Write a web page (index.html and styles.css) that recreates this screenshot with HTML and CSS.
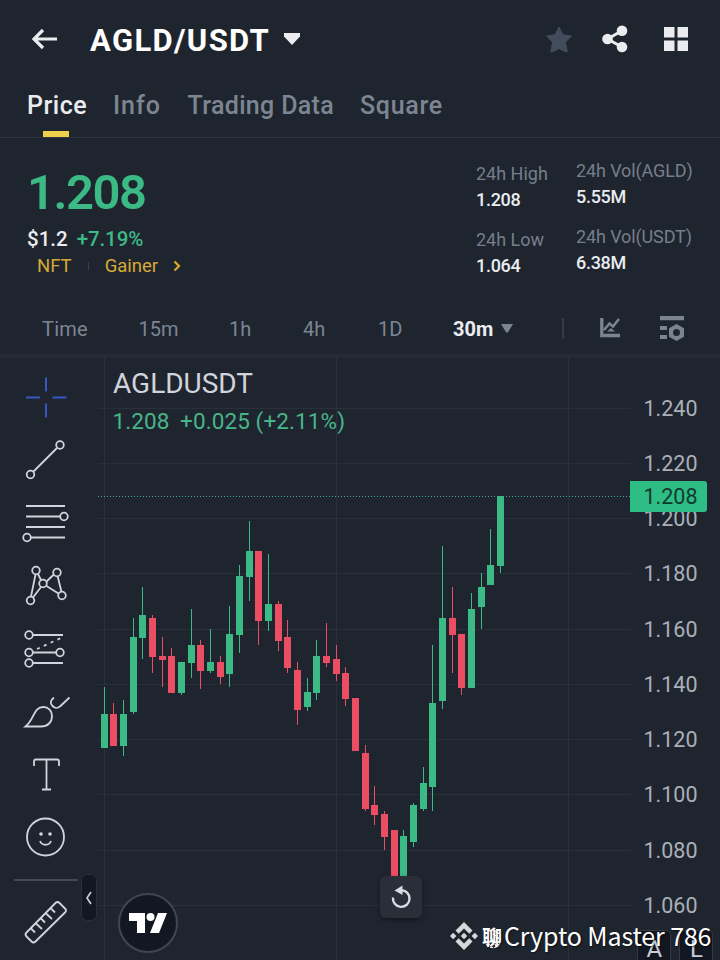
FILE: index.html
```html
<!DOCTYPE html>
<html lang="en">
<head>
<meta charset="utf-8">
<title>AGLD/USDT</title>
<link rel="stylesheet" href="styles.css">
</head>
<body>
<div class="app">
  <header class="topbar">
    <svg class="back" width="28" height="22" viewBox="0 0 28 22"><path d="M14 2 5 11l9 9M5 11h23" fill="none" stroke="#eaecef" stroke-width="3.200"/></svg>
    <h1 class="pair">AGLD/USDT</h1>
    <svg class="caret" width="18" height="14" viewBox="0 0 18 14"><path d="M1 1h16v3.500L9 13 1 4.500z" fill="#eaecef"/></svg>
    <div class="actions">
      <svg width="28" height="28" viewBox="0 0 28 28"><path d="m14 2 3.900 7.700 8.600 1.400-6.100 6.100 1.900 9.300-1.200.5L14 23.700 6.900 27l-1.200-.5 1.900-9.300-6.100-6.100 8.600-1.400z" fill="#434c5a" stroke="#434c5a" stroke-linejoin="round"/></svg>
      <svg width="28" height="28" viewBox="0 0 28 28"><g fill="#eaecef"><circle cx="7.500" cy="14" r="5.300"/><circle cx="22" cy="5.700" r="5.300"/><circle cx="22" cy="22" r="5.300"/></g><path d="M22 5.700 7.500 14 22 22" fill="none" stroke="#eaecef" stroke-width="3"/></svg>
      <svg width="26" height="26" viewBox="0 0 26 26"><path d="M1 1h10.500v10.500H1zM14.500 1H25v10.500H14.500zM1 14.500h10.500V25H1zM14.500 14.500H25V25H14.500z" fill="#eaecef"/></svg>
    </div>
  </header>

  <nav class="tabs">
    <a class="tab tab-active">Price</a>
    <a class="tab tab-info">Info</a>
    <a class="tab tab-data">Trading Data</a>
    <a class="tab">Square</a>
  </nav>

  <section class="summary">
    <div class="quote">
      <div class="last">1.208</div>
      <div class="change"><span>$1.2</span><span class="up">+7.19%</span></div>
      <div class="tags"><span>NFT</span><i class="tag-sep"></i><span class="gainer">Gainer</span>
        <svg width="8" height="12" viewBox="0 0 8 12"><path d="m1.500 1.500 4.500 4.500-4.500 4.500" fill="none" stroke="#d9a928" stroke-width="2.200"/></svg>
      </div>
    </div>
    <div class="stats stats-range">
      <div class="label">24h High</div><div class="value">1.208</div>
      <div class="label">24h Low</div><div class="value">1.064</div>
    </div>
    <div class="stats stats-vol">
      <div class="label">24h Vol(AGLD)</div><div class="value">5.55M</div>
      <div class="label">24h Vol(USDT)</div><div class="value">6.38M</div>
    </div>
  </section>

  <nav class="intervals">
    <span class="iv iv-time">Time</span><span class="iv iv-15">15m</span><span class="iv iv-1h">1h</span><span class="iv iv-4h">4h</span><span class="iv iv-1d">1D</span><span class="iv iv-on">30m</span>
    <svg class="iv-caret" width="12" height="9" viewBox="0 0 12 9"><path d="M0 0h12L6.800 8.500H5.200z" fill="#7c8492"/></svg>
    <i class="iv-sep"></i>
    <svg class="iv-line" width="20" height="21" viewBox="0 0 20 21"><g fill="none" stroke="#7c8492"><path d="M1.800 0v17.500H20" stroke-width="3.300"/><path d="m4 12 5.500-6.500 3.500 3 6-7.500" stroke-width="2.600"/></g><path d="m7 13.500 4-3.500 4 3.500z" fill="#7c8492"/></svg>
    <svg class="iv-set" width="26" height="26" viewBox="0 0 26 26"><path d="M1 0h24v4.200H1zM1 10h7v4H1zM1 19h7v4H1z" fill="#7c8492"/><path fill-rule="evenodd" d="m17.500 8 7.500 4.200v8.600L17.500 25 10 20.800v-8.600zM17.500 13a3.500 3.500 0 1 0 0 7 3.500 3.500 0 0 0 0-7z" fill="#7c8492"/></svg>
  </nav>

  <main class="board">
    <aside class="tools">
      <svg class="tool" viewBox="0 0 60 60"><path d="M30 10.500v14M30 36.500v14M10 30.500h14M36.500 30.500h14" stroke="#3558c4" stroke-width="2"/></svg>
      <svg class="tool" viewBox="0 0 60 60"><circle cx="14.500" cy="44.500" r="3.800"/><circle cx="44" cy="15" r="3.800"/><path d="m17.500 41.500 23.500-23.500"/></svg>
      <svg class="tool" viewBox="0 0 60 60"><path d="M10 13h39M10 23.500h34M10 34h39M15 44.500h34"/><circle cx="48" cy="23.500" r="3.800"/><circle cx="11" cy="44.500" r="3.800"/></svg>
      <svg class="tool" viewBox="0 0 60 60"><circle cx="20" cy="14.500" r="3.800"/><circle cx="41" cy="16.500" r="3.800"/><circle cx="27" cy="27.500" r="3.800"/><circle cx="14.500" cy="44.500" r="3.800"/><circle cx="46" cy="39.500" r="3.800"/><path d="m22 18 3 6M19.500 18.500 15 40.500M17 41.500l8-10.500M30.500 25.500l7.300-7M30.500 30l12 7.500M41.700 20.500l3.700 15"/></svg>
      <svg class="tool" viewBox="0 0 60 60"><circle cx="13" cy="16" r="3.800"/><circle cx="13" cy="33.500" r="3.800"/><circle cx="44" cy="33.500" r="3.800"/><circle cx="13" cy="44" r="3.800"/><path d="M17 16h30M17 33.500h23M17 44h30"/><path d="m21 30 24-11" stroke-dasharray="3 4.500"/></svg>
      <svg class="tool" viewBox="0 0 60 60"><path d="M9.500 44.500C19 37 17 25 27.500 25c5 0 8.500 4 8.500 9 0 6-4 10.500-11 10.500zM38 15.500c-4 3-4 6-1.500 8.500s4.500 3 8 0L53.500 15.500"/></svg>
      <svg class="tool" viewBox="0 0 60 60"><path d="M18 21v-4.500q0-2 2-2h21q2 0 2 2V21M30.500 14.500v30M26 44.500h9"/></svg>
      <svg class="tool" viewBox="0 0 60 60"><circle cx="29.500" cy="29" r="18.500"/><path d="M24 33c2 5 9 5 11 0"/><circle class="dot" cx="25" cy="26" r="1.800"/><circle class="dot" cx="34" cy="26" r="1.800"/></svg>
      <i class="tools-rule"></i>
      <svg class="tool tool-ruler" viewBox="0 0 60 60"><path d="m10.500 41.500 29-29.500q2-2 4 0l5.500 5.500q2 2 0 4l-29.500 29q-2 2-4 0l-5-5q-2-2 0-4zM15 37.500l4 4M20 32.500l6 5.500M25 27.500l4 4M30 22.500l6 5.500M35 17.500l4 4"/></svg>
      <button class="collapse"><svg width="8" height="14" viewBox="0 0 8 14"><path d="M6 1 2 7l4 6" fill="none" stroke="#c9ccd5" stroke-width="1.700"/></svg></button>
    </aside>
    <div class="chart">
      <svg id="chart" width="622" height="606" viewBox="98 354 622 606">
        <g id="grid"></g>
        <g id="candles"></g>
        <path class="last-line" d="M98 496.500h532"/>
        <text class="symbol" x="113" y="393" textLength="140">AGLDUSDT</text>
        <text class="legend" x="112.500" y="429" textLength="57">1.208</text>
        <text class="legend" x="180" y="429" textLength="165">+0.025 (+2.11%)</text>
        <g id="axis"></g>
        <path d="M630 481h74q3 0 3 3v25q0 3-3 3h-74z" fill="#2ebd85"/>
        <text class="tick tick-last" x="643.500" y="504" textLength="54">1.208</text>
        <g class="modes"><rect x="637.500" y="930.500" width="33" height="40" rx="4"/><rect x="679.500" y="930.500" width="33" height="40" rx="4"/></g>
        <text class="mode" x="646.500" y="957">A</text>
        <text class="mode" x="690" y="957">L</text>
      </svg>
      <div class="tv-logo"><svg width="38" height="20" viewBox="0 0 38 20"><path d="M0 0h16v20H8V8H0zM29 0h9l-8 20h-9z" fill="#fff"/><circle cx="21.500" cy="4" r="4" fill="#fff"/></svg></div>
      <button class="reset"><svg width="22" height="24" viewBox="0 0 22 24"><path d="M3 12.500A8.300 8.300 0 1 0 11 5.300" fill="none" stroke="#d9dbe2" stroke-width="2.400"/><path d="m4.500 5.500 8-5V10z" fill="#d9dbe2"/></svg></button>
      <div class="watermark">
        <svg width="28" height="28" viewBox="0 0 28 28"><path d="m14 0 8.500 8.500-3.200 3.200L14 6.500l-5.300 5.200-3.200-3.200zM14 28l8.500-8.500-3.200-3.200L14 21.500l-5.300-5.200-3.200 3.200zM14 10.800l3.200 3.200-3.200 3.200-3.200-3.200zM3.200 10.800 6.400 14l-3.200 3.200L0 14zM24.800 10.800 28 14l-3.200 3.200-3.200-3.200z" fill="#d7d8d9"/></svg>
        <span class="wm-cjk">聊<svg class="wm-seal" width="18" height="20" viewBox="0 0 18 20"><path d="M5 2q6-2 10 3M3 7q-3 6 1 10M6 18q6 2 9-3M9 5q5 2 3 7t-7 3M14 8q3 4 1 8M7 8l5 9" fill="none" stroke="#fff" stroke-width="1.200" stroke-dasharray="3 1"/></svg></span><span class="wm-name">Crypto Master 786</span>
      </div>
    </div>
  </main>
</div>
<script src="chart.js"></script>
</body>
</html>
```
FILE: styles.css
```css
* { box-sizing: border-box; }
body { margin: 0; background: #1f252f; color: #eaecef; font-family: Roboto, "Liberation Sans", sans-serif; }
.app { width: 720px; height: 960px; overflow: hidden; display: flex; flex-direction: column; }
svg { display: block; flex: none; }
button { padding: 0; border: 0; }

.topbar { height: 78px; display: flex; align-items: center; padding: 0 31px 0 29px; }
.back { margin-top: -1px; }
.pair { margin: 4px 0 0 33px; width: 193px; font-size: 31px; line-height: 36px; font-weight: 700; letter-spacing: 1.350px; color: #fff; white-space: nowrap; }
.actions { margin-left: auto; display: flex; align-items: center; gap: 27.500px; }
.actions svg:last-child { margin-left: 7.500px; }

.tabs { height: 60px; display: flex; padding: 0 27px; border-bottom: 1px solid #303641; }
.tab { position: relative; font-size: 25px; line-height: 29px; padding-top: 13px; font-weight: 500; letter-spacing: .7px; color: #7d8593; white-space: nowrap; }
.tab-active { color: #eaecef; width: 86px; letter-spacing: .5px; }
.tab-active::after { content: ""; position: absolute; left: 16px; bottom: 0; width: 26px; height: 6px; background: #f0cf4b; }
.tab-info { width: 74.500px; letter-spacing: 1px; }
.tab-data { width: 172.500px; letter-spacing: .330px; }

.summary { height: 165px; display: flex; padding-left: 27px; white-space: nowrap; }
.quote { width: 449px; padding-top: 25px; }
.last { font-size: 49px; line-height: 60px; font-weight: 600; color: #3cba86; letter-spacing: -1.500px; }
.change { display: flex; gap: 9px; margin-top: 4px; font-size: 20.500px; line-height: 24px; font-weight: 500; }
.up { color: #3cba86; letter-spacing: -.1px; }
.tags { display: flex; align-items: center; padding-left: 10px; margin-top: 3px; font-size: 18.500px; line-height: 24px; color: #d6aa35; }
.tag-sep { width: 1px; height: 8px; background: #3b414c; margin: 0 16px; }
.gainer { width: 68px; }
.stats { font-size: 18px; }
.stats-range { width: 100px; padding-top: 24px; }
.stats-vol { padding-top: 21px; }
.label { line-height: 24px; color: #767e8b; }
.stats-vol .label { letter-spacing: -.120px; }
.value { line-height: 24px; margin: 2px 0 16px; font-weight: 500; letter-spacing: -.3px; color: #eaecef; }

.intervals { height: 51px; display: flex; align-items: center; padding-left: 42px; font-size: 20px; color: #7d8593; white-space: nowrap; }
.iv-time { width: 96.500px; letter-spacing: .2px; }
.iv-15 { width: 90.500px; }
.iv-1h { width: 74px; }
.iv-4h { width: 75px; }
.iv-1d { width: 75px; }
.iv-on { width: 48px; color: #eaecef; font-weight: 700; }
.iv-sep { width: 2px; height: 21px; background: #353b46; margin: 0 36px 0 49px; }
.iv-set { margin-left: 39px; }

.board { height: 606px; display: flex; background: linear-gradient(#252b35 0 4px, transparent 4px); }
.tools { position: relative; width: 98px; padding: 13px 0 0 16px; display: flex; flex-direction: column; }
.tool { width: 60px; height: 60px; margin-bottom: 3px; flex: none; fill: none; stroke: #d1d4dc; stroke-width: 1.800; }
.tool .dot { fill: #d1d4dc; stroke: none; }
.tools-rule { flex: none; width: 64px; height: 2px; margin-left: -2px; margin-top: 8px; background: #444954; }
.tool-ruler { margin-top: 10px; }
.collapse { position: absolute; left: 82px; top: 521px; width: 14px; height: 45px; border-radius: 5px; background: #131722; box-shadow: 0 0 0 1px #2a2e39; display: flex; align-items: center; justify-content: center; }
.chart { position: relative; width: 622px; }
.grid-line { stroke: #2a303a; stroke-width: 1; fill: none; }
.last-line { stroke: #47a889; stroke-dasharray: 1 2; fill: none; }
.symbol { font-size: 28px; fill: #d1d4dc; }
.legend { font-size: 22.500px; fill: #47b58a; }
.tick { font-size: 21.500px; fill: #abafb8; }
.tick-last { fill: #103b2c; }
.modes rect { fill: #131722; stroke: #343943; }
.mode { font-size: 24px; fill: #c9ccd5; }
.tv-logo { position: absolute; left: 20px; top: 539px; width: 60px; height: 60px; border-radius: 50%; border: 2px solid #434651; background: #131722; display: flex; align-items: center; justify-content: center; }
.reset { position: absolute; left: 282px; top: 522px; width: 42px; height: 42px; border-radius: 6px; background: #2a2e39; box-shadow: 0 2px 5px rgba(0, 0, 0, .4); display: flex; align-items: center; justify-content: center; }
.watermark { position: absolute; left: 352px; top: 564px; height: 36px; display: flex; align-items: center; font-family: "Noto Sans CJK SC", "Noto Sans", sans-serif; color: #fff; white-space: nowrap; text-shadow: 1px 1px 2px rgba(0, 0, 0, .6); }
.wm-cjk { position: relative; width: 26px; padding-left: 4px; font-size: 20px; font-weight: 700; }
.wm-seal { position: absolute; left: 6px; top: 7px; }
.wm-name { margin-top: -3px; font-size: 25px; line-height: 36px; letter-spacing: -.130px; }
```
FILE: chart.js
```js
// Each candle: left, body top, body bottom, wick top, wick bottom, rising
const candles = [
  [101,714,748,687,748,1],[110,714,746,703,746,0],[120,714,746,700,756,1],[130,637,712,618,714,1],
  [139,615,638,587,659,1],[149,618,657,615,673,0],[159,656,660,637,687,0],[168,656,693,648,693,0],
  [178,662,693,662,695,1],[188,645,663,609,678,1],[197,645,671,640,689,0],[207,662,671,629,673,1],
  [217,662,677,656,684,0],[226,634,674,606,687,1],[236,576,635,565,653,1],[246,551,577,521,601,1],
  [255,551,621,551,645,0],[265,604,621,554,631,1],[275,604,641,601,651,0],[284,637,668,620,673,0],
  [294,670,710,662,725,0],[304,692,707,678,711,1],[313,656,693,640,700,1],[323,656,663,623,667,0],
  [333,659,674,645,681,0],[342,673,699,667,706,0],[352,698,751,698,751,0],[362,753,809,745,811,0],
  [371,805,815,786,825,0],[381,814,837,811,850,0],[391,830,876,830,876,0],[400,836,876,830,876,1],
  [410,805,842,803,847,1],[420,783,809,767,811,1],[429,703,787,645,811,1],[439,618,701,546,709,1],
  [449,618,635,587,673,0],[458,634,688,634,695,0],[468,609,688,593,688,1],[478,587,607,573,629,1],
  [487,565,585,529,585,1],[497,496,566,496,573,1]
];
document.getElementById('candles').innerHTML = candles.map(([x, t, b, wt, wb, up]) => {
  const c = up ? '#3cba86' : '#eb4d63';
  return `<path fill="${c}" d="M${x} ${t}h7v${b - t}h-7zM${x + 3} ${wt}h1v${wb - wt}h-1z"/>`;
}).join('');

const rows = [408, 463, 518, 573, 629, 684, 739, 794, 850, 905];
document.getElementById('grid').innerHTML =
  rows.map(y => `<path class="grid-line" d="M98 ${y + .5}h533"/>`).join('') +
  [104, 336, 568].map(x => `<path class="grid-line" d="M${x + .5} 355v605"/>`).join('');
document.getElementById('axis').innerHTML =
  rows.map((y, i) => `<text class="tick" x="643.500" y="${y + 8}" textLength="54">${(1.24 - i * .02).toFixed(3)}</text>`).join('');
```
